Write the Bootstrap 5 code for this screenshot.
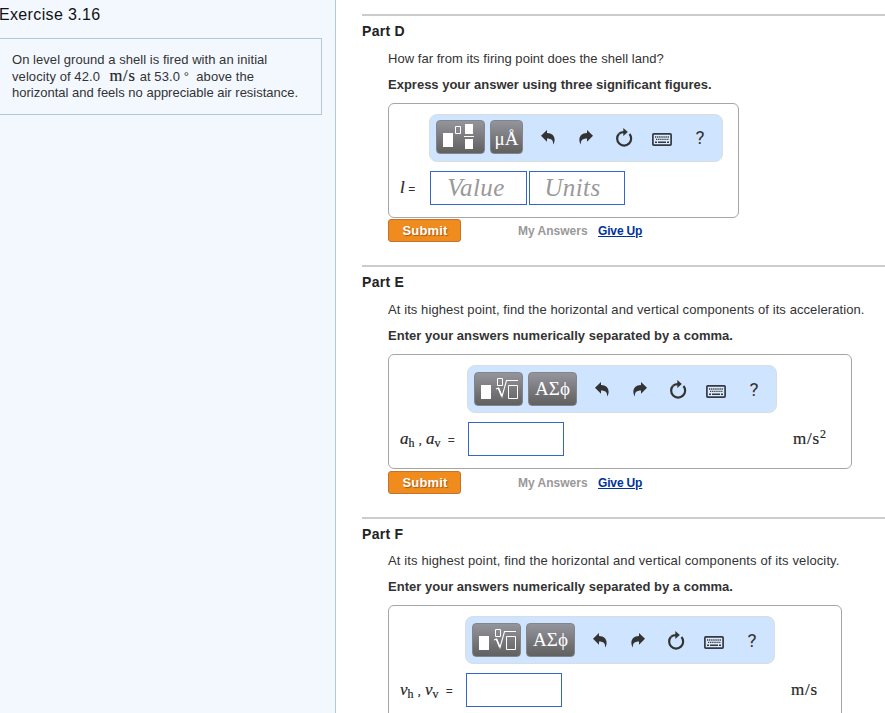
<!DOCTYPE html>
<html lang="en">
<head>
<meta charset="utf-8">
<meta name="viewport" content="width=device-width, initial-scale=1">
<title>Exercise 3.16</title>
<link href="https://cdn.jsdelivr.net/npm/bootstrap@5.3.0/dist/css/bootstrap.min.css" rel="stylesheet">
<style>
body{font-family:"Liberation Sans",Arial,sans-serif;font-size:13px;line-height:17px;color:#333;height:713px;overflow:hidden}
.side{width:336px;height:713px;background:#f3f8ff;border-right:1px solid #b5c8da}
.side h1{font-size:16px;line-height:20px;margin:5px 0 0 -1px;color:#111;letter-spacing:.35px}
.statement{margin:13px 13px 0 0;height:77px;border:1px solid #b5c8da;border-left:0;padding:12px 0 0 12px;white-space:nowrap}
.statement div{height:16.5px;line-height:17px}
.s1{letter-spacing:.05px}
.s2{letter-spacing:.08px}
.serif{font-family:"Liberation Serif","Times New Roman",serif}
.main{height:713px;padding:14px 0 0 26px;overflow:hidden}
.part{border-top:2px solid #ccc;height:251px}
.part-e{height:252px}
.part h2{font-size:14px;font-weight:bold;line-height:18px;margin:6px 0 0;color:#222;letter-spacing:.3px}
.body-in{margin-left:26px;white-space:nowrap}
.q{margin-top:10px;height:17px}
.part-f .q{margin-top:9px}
.qd{letter-spacing:.04px}
.qe{letter-spacing:.087px}
.qf{letter-spacing:.125px}
.ie{letter-spacing:.02px}
.ins{margin-top:9px;height:17px;font-weight:bold}
.answer{border:1px solid #a6a6a6;border-radius:6px;height:115px;margin-top:10px;padding:10px 0 0 11px}
.ans-d{width:351px}
.ans-e{width:464px}
.ans-f{width:454px}
.bar{height:48px;background:#cfe5ff;border:1px solid #dadde0;border-radius:8px;padding-left:6px}
.ans-d .bar{width:294px;margin-left:29px;padding-bottom:2px}
.ans-e .bar{width:310px;margin-left:67px}
.ans-f .bar{width:310px;margin-left:65px}
.pal{height:34px;width:49px;border-radius:4px;background:linear-gradient(#94949c,#606060);border:1px solid #858589;margin-right:5px;color:#fff;font-size:19px;line-height:31px}
.pal.sm{width:33px;line-height:35px;margin-right:6px}
.ans-e .pal+.pal,.ans-f .pal+.pal{margin-right:6px}
.tool{width:38px;height:46px}
.q-mark{font-family:Roboto,sans-serif;font-size:19px;color:#333}
.entry{height:34px;margin-top:9px}
.field{width:96px;height:34px;border:1px solid #36c;border-radius:0;background:#fff;color:#999;padding:0 5px 0 0;font-size:25px;font-style:italic;text-align:center;letter-spacing:.4px}
.field::placeholder{color:#999;opacity:1}
.f-value{width:97px;margin-right:2px}
.f-units{padding-right:9px}
.ans-d .lab{width:30px}
.ans-e .lab{width:68px}
.ans-f .lab{width:66px}
.math{font-size:17px;color:#222;-webkit-text-stroke:.2px #333}
.math sub{font-size:12px;bottom:-.3em}
.math sup{font-size:12px;top:-.45em}
.ms{font-size:16.500px;letter-spacing:.9px;line-height:1;margin-left:2px}
.unit{margin-left:229px;margin-top:-2px;letter-spacing:.8px}
.eq{font-size:12px}
.btn-go{width:73px;height:23px;background:#f08c1e;border:1px solid #c4722e;border-radius:3px;color:#fff;font-size:13px;font-weight:bold;line-height:21px;padding:0 0 0 1px;letter-spacing:.15px;text-shadow:1px 1px 1px #a05a10}
.acts{height:23px;margin-top:1px;font-size:12px;font-weight:bold}
.part-e .acts{margin-top:2px}
.mine{color:#999;margin:1px 0 0 57px;width:80px}
.acts a{color:#039;margin-top:1px;letter-spacing:-.15px}
</style>
<script src="https://cdn.jsdelivr.net/npm/bootstrap@5.3.0/dist/js/bootstrap.bundle.min.js"></script>
</head>
<body class="bg-white">
<svg width="0" height="0" class="position-absolute">
<symbol id="undo" viewBox="0 0 14 15"><path fill="#333" d="M6 0v3c5 0 8 3 7.600 7.500-.2 1.800-.7 3-1.600 4.100.6-4-1.500-6-6-6v3.200L0 5.800z"/></symbol>
<symbol id="redo" viewBox="0 0 14 15"><path fill="#333" d="M8 0v3C3 3 0 6 .4 10.500c.2 1.800.7 3 1.600 4.100-.6-4 1.500-6 6-6v3.200l6-6z"/></symbol>
<symbol id="reset" viewBox="0 0 18 19"><path fill="none" stroke="#333" stroke-width="2.200" d="M4 5.800A7 7 0 1 0 14.500 6M9 4.200Q6 4.200 4.200 5.600"/><path fill="#333" d="M8.300 0l4.500 4-4.500 4z"/></symbol>
<symbol id="keys" viewBox="0 0 20 13"><rect x=".9" y=".9" width="18.200" height="11.200" rx=".8" fill="#dceafb" stroke="#333a44" stroke-width="1.700"/><path stroke="#333a44" stroke-width="1.400" stroke-dasharray="1.300 .8" d="M3 4h14M4 6.400h13"/><path stroke="#333a44" stroke-width="1.400" d="M3 9.200h2M6 9.200h8M15 9.200h2"/></symbol>
<symbol id="root" viewBox="0 0 47 31"><path fill="#fff" d="M6 12h10v14H6z"/><path fill="none" stroke="#fff" stroke-width="1" d="M22.500 5.500h5v7h-5zM33.500 12.500h9v13h-9z"/><path fill="none" stroke="#fff" stroke-width="1.100" d="M21 16l2.500-1 3.500 8.500 4.500-16h11.500"/><path stroke="#fff" stroke-width="1.600" d="M23.500 15.200l3.200 7.800"/></symbol>
<symbol id="frac" viewBox="0 0 47 31"><path fill="#fff" d="M6 12h10v14H6zM28 3h8v10h-8zM28 18h8v10h-8zM27 15h10v1H27z"/><path fill="none" stroke="#fff" d="M18.500 5.500h5v7h-5z"/></symbol>
</svg>
<div class="d-flex">
<aside class="side flex-shrink-0">
<h1>Exercise 3.16</h1>
<div class="statement">
<div><span class="s1">On level ground a shell is fired with an initial</span></div>
<div><span class="s2">velocity of 42.0 &nbsp;<span class="serif math ms">m/s</span> at 53.0 ° &nbsp;above the</span></div>
<div><span class="s3">horizontal and feels no appreciable air resistance.</span></div>
</div>
</aside>
<main class="main flex-grow-1">
<section class="part">
<h2>Part D</h2>
<div class="body-in">
<div class="q"><span class="qd">How far from its firing point does the shell land?</span></div>
<div class="ins"><span class="id">Express your answer using three significant figures.</span></div>
<div class="answer ans-d">
<div class="bar d-flex align-items-center">
<div class="pal"><svg class="d-block" width="47" height="31"><use href="#frac"/></svg></div>
<div class="pal sm serif text-center">μÅ</div>
<div class="tool d-flex align-items-center justify-content-center"><svg width="14" height="15"><use href="#undo"/></svg></div>
<div class="tool d-flex align-items-center justify-content-center"><svg width="14" height="15"><use href="#redo"/></svg></div>
<div class="tool d-flex align-items-center justify-content-center"><svg width="18" height="19"><use href="#reset"/></svg></div>
<div class="tool d-flex align-items-center justify-content-center pt-1"><svg width="20" height="13"><use href="#keys"/></svg></div>
<div class="tool d-flex align-items-center justify-content-center q-mark">?</div>
</div>
<div class="entry d-flex align-items-center">
<div class="lab"><i class="serif math">l</i> <span class="eq">=</span></div>
<input class="field serif f-value" placeholder="Value" aria-label="Value"><input class="field serif f-units" placeholder="Units" aria-label="Units">
</div>
</div>
<div class="acts d-flex align-items-center"><button class="btn-go">Submit</button><span class="mine">My Answers</span><a href="#">Give Up</a></div>
</div>
</section>
<section class="part part-e">
<h2>Part E</h2>
<div class="body-in">
<div class="q"><span class="qe">At its highest point, find the horizontal and vertical components of its acceleration.</span></div>
<div class="ins"><span class="ie">Enter your answers numerically separated by a comma.</span></div>
<div class="answer ans-e">
<div class="bar d-flex align-items-center">
<div class="pal"><svg class="d-block" width="47" height="31"><use href="#root"/></svg></div>
<div class="pal serif text-center">ΑΣϕ</div>
<div class="tool d-flex align-items-center justify-content-center"><svg width="14" height="15"><use href="#undo"/></svg></div>
<div class="tool d-flex align-items-center justify-content-center"><svg width="14" height="15"><use href="#redo"/></svg></div>
<div class="tool d-flex align-items-center justify-content-center"><svg width="18" height="19"><use href="#reset"/></svg></div>
<div class="tool d-flex align-items-center justify-content-center pt-1"><svg width="20" height="13"><use href="#keys"/></svg></div>
<div class="tool d-flex align-items-center justify-content-center q-mark">?</div>
</div>
<div class="entry d-flex align-items-center">
<div class="lab"><span class="serif math"><i>a</i><sub>h</sub> <small class="eq">,</small> <i>a</i><sub>v</sub></span>&nbsp; <span class="eq">=</span></div>
<input class="field serif" aria-label="Acceleration components"><span class="serif math unit">m/s<sup>2</sup></span>
</div>
</div>
<div class="acts d-flex align-items-center"><button class="btn-go">Submit</button><span class="mine">My Answers</span><a href="#">Give Up</a></div>
</div>
</section>
<section class="part part-f">
<h2>Part F</h2>
<div class="body-in">
<div class="q"><span class="qf">At its highest point, find the horizontal and vertical components of its velocity.</span></div>
<div class="ins"><span class="ie">Enter your answers numerically separated by a comma.</span></div>
<div class="answer ans-f">
<div class="bar d-flex align-items-center">
<div class="pal"><svg class="d-block" width="47" height="31"><use href="#root"/></svg></div>
<div class="pal serif text-center">ΑΣϕ</div>
<div class="tool d-flex align-items-center justify-content-center"><svg width="14" height="15"><use href="#undo"/></svg></div>
<div class="tool d-flex align-items-center justify-content-center"><svg width="14" height="15"><use href="#redo"/></svg></div>
<div class="tool d-flex align-items-center justify-content-center"><svg width="18" height="19"><use href="#reset"/></svg></div>
<div class="tool d-flex align-items-center justify-content-center pt-1"><svg width="20" height="13"><use href="#keys"/></svg></div>
<div class="tool d-flex align-items-center justify-content-center q-mark">?</div>
</div>
<div class="entry d-flex align-items-center">
<div class="lab"><span class="serif math"><i>v</i><sub>h</sub> <small class="eq">,</small> <i>v</i><sub>v</sub></span>&nbsp; <span class="eq">=</span></div>
<input class="field serif" aria-label="Velocity components"><span class="serif math unit">m/s</span>
</div>
</div>
</div>
</section>
</main>
</div>
</body>
</html>
